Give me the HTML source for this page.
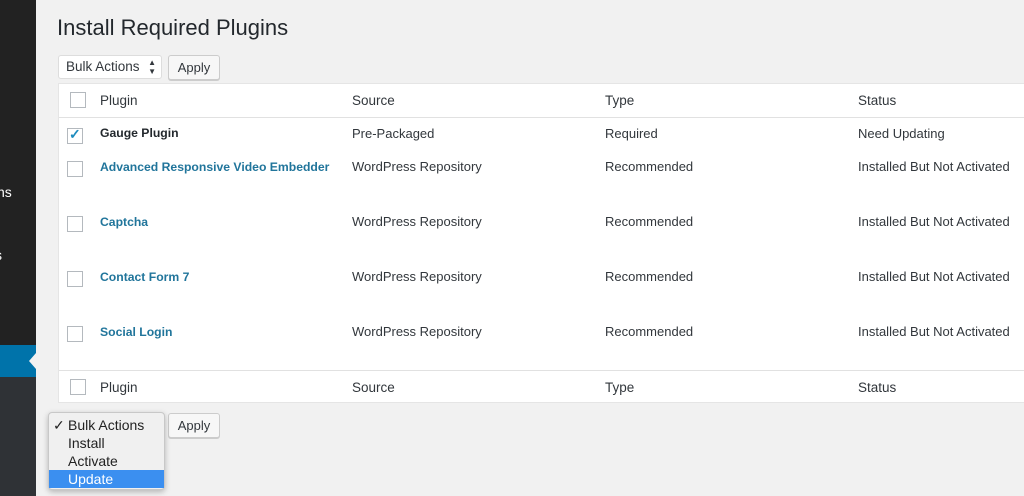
<!DOCTYPE html>
<html><head><style>
body{margin:0;width:1024px;height:496px;background:#f1f1f1;font-family:"Liberation Sans",sans-serif;position:relative;overflow:hidden;color:#32373c;font-size:13px}
.sb{position:absolute;left:0;top:0;width:36px;height:496px;background:#222}
.sb .blue{position:absolute;top:345px;height:32px;left:0;width:36px;background:#0073aa}
.sb .low{position:absolute;top:377px;bottom:0;left:0;width:36px;background:#2f3236}
.arrow{position:absolute;left:29px;top:353px;width:0;height:0;border-top:8px solid transparent;border-bottom:8px solid transparent;border-right:7px solid #f1f1f1}
.t{position:absolute;color:#fff;font-size:14px}
h1{position:absolute;left:57px;top:15px;margin:0;font-size:22px;font-weight:normal;color:#23282d}
.sel{position:absolute;left:58px;top:55px;width:104px;height:24px;background:#fff;border:1px solid #ddd;border-radius:3px;box-sizing:border-box;font-size:13.5px;line-height:22px;padding-left:7px}
.btn{position:absolute;width:52px;height:25px;background:#f7f7f7;border:1px solid #ccc;border-radius:3px;box-sizing:border-box;font-size:13px;line-height:23px;text-align:center;box-shadow:0 1px 0 #ccc}
.tbl{position:absolute;left:58px;top:83px;width:966px;height:320px;background:#fff;border:1px solid #e5e5e5;border-right:none;box-sizing:border-box}
.c{position:absolute;font-size:13px}
.cb{position:absolute;width:16px;height:16px;border:1px solid #b4b9be;box-sizing:border-box;background:#fff}
.h{font-size:13.5px;color:#32373c}
a{color:#21759b;font-weight:bold;text-decoration:none;font-size:12.2px}
.dd{position:absolute;left:48px;top:412px;width:117px;height:78px;background:#f0f0f0;border:1px solid #c8c8c8;border-radius:4px;box-shadow:0 2px 6px rgba(0,0,0,.25);font-size:14px;color:#222;box-sizing:border-box}
.dd div{height:18px;line-height:18px;padding-left:19px}
</style></head><body>
<div class="sb"><div class="blue"></div><div class="low"></div></div>
<div class="t" style="left:-3px;top:184px">ns</div>
<div class="t" style="left:-5px;top:247px">s</div>
<div class="arrow"></div>
<h1>Install Required Plugins</h1>
<div class="sel">Bulk Actions <span style="position:absolute;right:5px;font-size:8px;line-height:9px;top:2px">▲<br>▼</span></div>
<div class="btn" style="left:168px;top:55px">Apply</div>
<div class="tbl">
<div style="position:absolute;left:0;right:0;top:33px;border-top:1px solid #e1e1e1"></div>
<div style="position:absolute;left:0;right:0;top:286px;border-top:1px solid #e1e1e1"></div>
</div>
<div class="cb" style="left:70px;top:92px"></div>
<div class="c h" style="left:100px;top:93px">Plugin</div>
<div class="c h" style="left:352px;top:93px">Source</div>
<div class="c h" style="left:605px;top:93px">Type</div>
<div class="c h" style="left:858px;top:93px">Status</div>

<div class="cb" style="left:67px;top:128px"><span style="position:absolute;left:1px;top:-3px;color:#1e8cbe;font-size:14px;font-weight:bold">✓</span></div>
<div class="c" style="left:100px;top:126px;font-weight:bold;color:#23282d;font-size:12.2px">Gauge Plugin</div>
<div class="c" style="left:352px;top:126px">Pre-Packaged</div>
<div class="c" style="left:605px;top:126px">Required</div>
<div class="c" style="left:858px;top:126px">Need Updating</div>

<div class="cb" style="left:67px;top:161px"></div>
<div class="c" style="left:100px;top:159px"><a>Advanced Responsive Video Embedder</a></div>
<div class="c" style="left:352px;top:159px">WordPress Repository</div>
<div class="c" style="left:605px;top:159px">Recommended</div>
<div class="c" style="left:858px;top:159px">Installed But Not Activated</div>

<div class="cb" style="left:67px;top:216px"></div>
<div class="c" style="left:100px;top:214px"><a>Captcha</a></div>
<div class="c" style="left:352px;top:214px">WordPress Repository</div>
<div class="c" style="left:605px;top:214px">Recommended</div>
<div class="c" style="left:858px;top:214px">Installed But Not Activated</div>

<div class="cb" style="left:67px;top:271px"></div>
<div class="c" style="left:100px;top:269px"><a>Contact Form 7</a></div>
<div class="c" style="left:352px;top:269px">WordPress Repository</div>
<div class="c" style="left:605px;top:269px">Recommended</div>
<div class="c" style="left:858px;top:269px">Installed But Not Activated</div>

<div class="cb" style="left:67px;top:326px"></div>
<div class="c" style="left:100px;top:324px"><a>Social Login</a></div>
<div class="c" style="left:352px;top:324px">WordPress Repository</div>
<div class="c" style="left:605px;top:324px">Recommended</div>
<div class="c" style="left:858px;top:324px">Installed But Not Activated</div>

<div class="cb" style="left:70px;top:379px"></div>
<div class="c h" style="left:100px;top:380px">Plugin</div>
<div class="c h" style="left:352px;top:380px">Source</div>
<div class="c h" style="left:605px;top:380px">Type</div>
<div class="c h" style="left:858px;top:380px">Status</div>

<div class="btn" style="left:168px;top:413px">Apply</div>
<div class="dd">
<div style="position:relative;margin-top:3px"><span style="position:absolute;left:4px">✓</span>Bulk Actions</div>
<div>Install</div>
<div>Activate</div>
<div style="background:#3b8ff0;color:#fff;">Update</div>
</div>
</body></html>
